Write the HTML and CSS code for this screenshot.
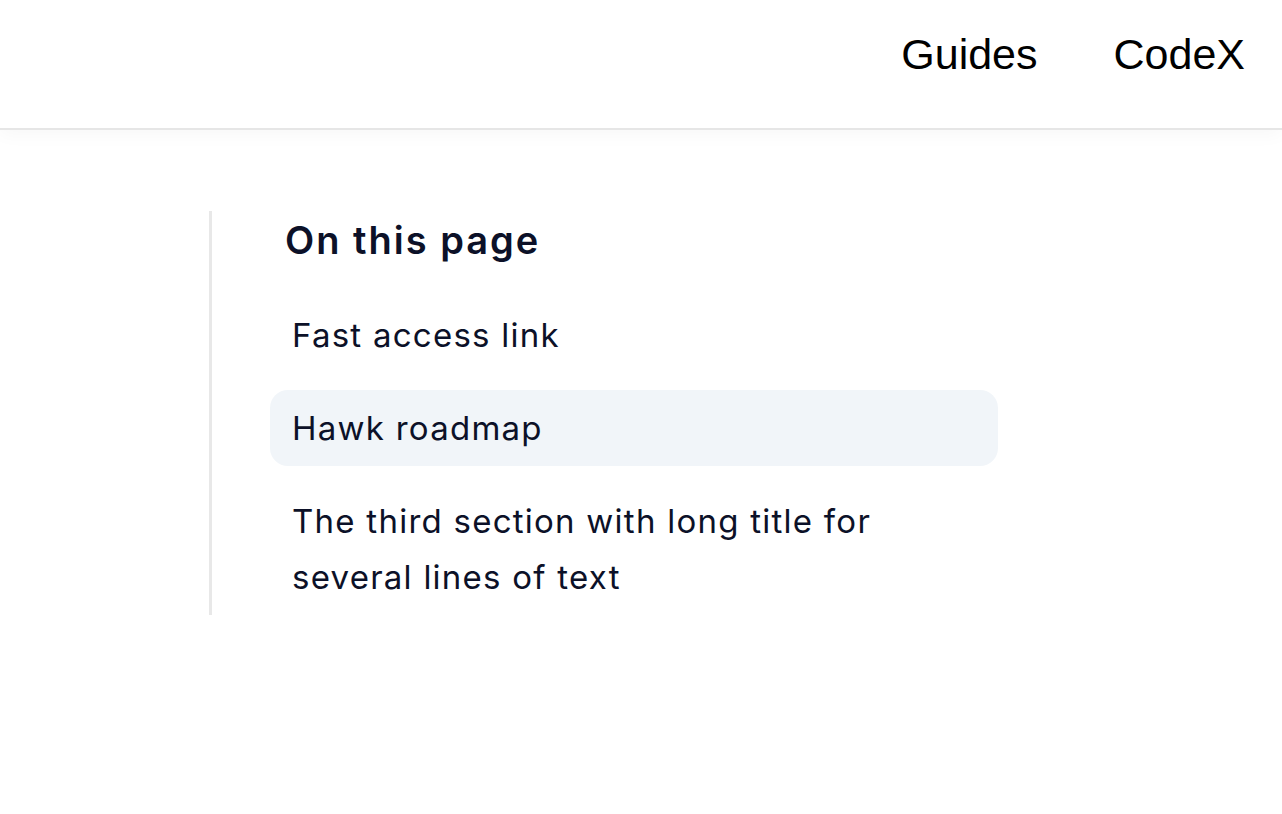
FILE: index.html
```html
<!DOCTYPE html>
<html lang="en">
<head>
<meta charset="utf-8">
<title>On this page</title>
<link rel="stylesheet" href="styles.css">
</head>
<body>
<header class="header">
  <nav class="nav">
    <a class="nav-link" href="#">Guides</a>
    <a class="nav-link" href="#">CodeX</a>
  </nav>
</header>
<main class="main">
  <aside class="toc">
    <h2 class="toc-title">On this page</h2>
    <ul class="toc-list">
      <li class="toc-item">Fast access link</li>
      <li class="toc-item toc-item--active">Hawk roadmap</li>
      <li class="toc-item">The third section with long title for several lines of text</li>
    </ul>
  </aside>
</main>
</body>
</html>
```
FILE: styles.css
```css
html, body {
  margin: 0;
  padding: 0;
  background: #ffffff;
}
body {
  font-family: Inter, "Noto Sans", sans-serif;
}
.header {
  height: 128px;
  border-bottom: 2px solid #e6e6e6;
  box-shadow: 0 4px 18px rgba(0, 0, 0, 0.035);
  display: flex;
  justify-content: flex-end;
  align-items: center;
  padding-right: 37px;
}
.nav {
  display: flex;
  gap: 76px;
  padding-bottom: 20px;
}
.nav-link {
  font-family: "Liberation Sans", Arial, sans-serif;
  font-size: 43px;
  color: #000000;
  text-decoration: none;
}
.main {
  padding: 81px 0 0 209px;
}
.toc {
  border-left: 3px solid #e8e8e8;
  padding-left: 58px;
  width: 728px;
}
.toc-title {
  margin: 0 0 28px 0;
  padding-left: 15px;
  font-size: 38px;
  line-height: 58px;
  font-weight: 600;
  letter-spacing: 2px;
  color: #0c1128;
}
.toc-list {
  list-style: none;
  margin: 0;
  padding: 0;
  display: flex;
  flex-direction: column;
  gap: 17px;
}
.toc-item {
  padding: 10px 22px;
  font-size: 33px;
  line-height: 56px;
  letter-spacing: 1.25px;
  color: #0c1128;
  border-radius: 18px;
}
.toc-item--active {
  background: #f1f5f9;
}
```
